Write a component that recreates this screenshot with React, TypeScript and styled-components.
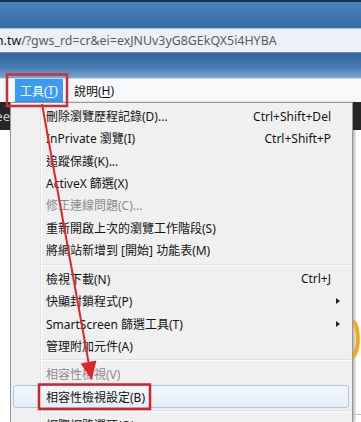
import styled, { createGlobalStyle } from 'styled-components';

const GlobalStyle = createGlobalStyle`
  html, body { margin: 0; padding: 0; background: #fff; }
  body { font-family: "Noto Sans", "Noto Sans CJK TC", sans-serif; }
`;

const Screen = styled.div`
  position: relative;
  width: 361px;
  height: 422px;
  overflow: hidden;
  display: flex;
  flex-direction: column;
  background: #fff;
`;

const TitleBand = styled.div`
  flex: none;
  height: 28px;
  box-sizing: border-box;
  border-top: 2px solid #16304d;
  background: linear-gradient(180deg, #4a82ba 0%, #3c74ad 60%, #386fa8 100%);
`;

const AddressBar = styled.div`
  flex: none;
  height: 25px;
  box-sizing: border-box;
  border-top: 1px solid #a9c0d8;
  border-bottom: 1px solid #6a8fb6;
  background: #ecf1f7;
  display: flex;
  align-items: center;
  white-space: nowrap;
  overflow: hidden;
  font-size: 12.4px;
  color: #5c5c5c;
`;

const Host = styled.span`
  color: #111;
  margin-left: -8px;
`;

const NavBand = styled.div`
  flex: none;
  height: 26px;
  box-sizing: border-box;
  border-bottom: 1px solid #c9d9ea;
  background: linear-gradient(180deg, #3467a0 0%, #4478b0 55%, #7ea7d0 100%);
`;

const MenuBar = styled.div`
  flex: none;
  height: 23px;
  display: flex;
  align-items: stretch;
  padding-left: 15px;
  gap: 6px;
  background: #f7f8f9;
  font-size: 12px;
`;

const MenuTitle = styled.div<{ $active?: boolean }>`
  display: flex;
  align-items: center;
  padding: 0 5px;
  color: ${(p) => (p.$active ? '#fff' : '#111')};
  background: ${(p) => (p.$active ? '#3a9af4' : 'transparent')};
  u { text-underline-offset: 2px; }
`;

const Body = styled.div`
  flex: 1;
  display: flex;
  min-height: 0;
`;

const PageSide = styled.div<{ $w: number }>`
  flex: none;
  width: ${(p) => p.$w}px;
  display: flex;
  flex-direction: column;
  position: relative;
`;

const DarkStrip = styled.div`
  height: 28px;
  background: #262626;
  color: #cfcfcf;
  font-size: 13px;
  display: flex;
  align-items: center;
  justify-content: flex-end;
  overflow: hidden;
  white-space: nowrap;
`;

const Arc = styled.svg`
  margin-top: 189px;
  display: block;
`;

const Rule = styled.div`
  margin-top: 55px;
  margin-left: 2px;
  height: 1px;
  background: #bdbdbd;
`;

const Menu = styled.div`
  flex: none;
  width: 343px;
  box-sizing: border-box;
  border: 1px solid #979797;
  border-bottom: none;
  padding-top: 2px;
  box-shadow: 2px 0 2px rgba(0, 0, 0, 0.28);
  background: linear-gradient(
    to right,
    #f0f0f0 29px,
    #e2e3e3 29px,
    #e2e3e3 30px,
    #ffffff 30px,
    #ffffff 31px,
    #f0f0f0 31px
  );
  font-size: 12px;
  color: #111;
`;

const Row = styled.div<{ $disabled?: boolean; $hot?: boolean }>`
  height: 22.33px;
  box-sizing: border-box;
  margin: 0 3px 0 2px;
  padding-left: 32px;
  display: flex;
  align-items: center;
  justify-content: space-between;
  white-space: nowrap;
  border: 1px solid ${(p) => (p.$hot ? '#a9c6e8' : 'transparent')};
  border-radius: 3px;
  background: ${(p) =>
    p.$hot ? 'linear-gradient(180deg, #f3f7fc 0%, #e6eef8 100%)' : 'transparent'};
  color: ${(p) => (p.$disabled ? '#8c8c8c' : '#141414')};
`;

const Shortcut = styled.span`
  margin-right: 17px;
`;

const SubArrow = styled.span`
  width: 0;
  height: 0;
  margin-right: 8px;
  border-top: 3.5px solid transparent;
  border-bottom: 3.5px solid transparent;
  border-left: 4px solid #222;
`;

const Separator = styled.div<{ $h: number }>`
  height: ${(p) => p.$h}px;
  margin-left: 31px;
  margin-right: 1px;
  display: flex;
  flex-direction: column;
  justify-content: center;
  &::before {
    content: '';
    height: 1px;
    background: #e0e0e0;
  }
  &::after {
    content: '';
    height: 1px;
    background: #fff;
  }
`;

const Marks = styled.svg`
  position: absolute;
  left: 0;
  top: 0;
  pointer-events: none;
`;

type Item = { label: string; key?: string; sub?: boolean; disabled?: boolean; hot?: boolean };

const groups: Item[][] = [
  [
    { label: '刪除瀏覽歷程記錄(D)...', key: 'Ctrl+Shift+Del' },
    { label: 'InPrivate 瀏覽(I)', key: 'Ctrl+Shift+P' },
    { label: '追蹤保護(K)...' },
    { label: 'ActiveX 篩選(X)' },
    { label: '修正連線問題(C)...', disabled: true },
    { label: '重新開啟上次的瀏覽工作階段(S)' },
    { label: '將網站新增到 [開始] 功能表(M)' },
  ],
  [
    { label: '檢視下載(N)', key: 'Ctrl+J' },
    { label: '快顯封鎖程式(P)', sub: true },
    { label: 'SmartScreen 篩選工具(T)', sub: true },
    { label: '管理附加元件(A)' },
  ],
  [
    { label: '相容性檢視(V)', disabled: true },
    { label: '相容性檢視設定(B)', hot: true },
  ],
  [{ label: '網際網路選項(O)' }],
];

const sepHeights = [6.5, 6, 6.5];

const MenuRow = ({ item }: { item: Item }) => (
  <Row $disabled={item.disabled} $hot={item.hot}>
    <span>{item.label}</span>
    {item.key && <Shortcut>{item.key}</Shortcut>}
    {item.sub && <SubArrow />}
  </Row>
);

export default function App() {
  return (
    <Screen>
      <GlobalStyle />
      <TitleBand />
      <AddressBar>
        <Host>m.tw</Host>/?gws_rd=cr&amp;ei=exJNUv3yG8GEkQX5i4HYBA
      </AddressBar>
      <NavBand />
      <MenuBar>
        <MenuTitle $active>
          工具(<u>T</u>)
        </MenuTitle>
        <MenuTitle>
          說明(<u>H</u>)
        </MenuTitle>
      </MenuBar>
      <Body>
        <PageSide $w={10}>
          <DarkStrip>ee</DarkStrip>
        </PageSide>
        <Menu>
          {groups.map((g, gi) => (
            <div key={gi}>
              {g.map((item) => (
                <MenuRow key={item.label} item={item} />
              ))}
              {gi < sepHeights.length && <Separator $h={sepHeights[gi]} />}
            </div>
          ))}
        </Menu>
        <PageSide $w={8}>
          <DarkStrip />
          <Arc width="8" height="40" viewBox="0 0 8 40">
            <path d="M0 2 C 6 8, 7 30, 0 38" fill="none" stroke="#f5a915" strokeWidth="4" />
          </Arc>
          <Rule />
        </PageSide>
      </Body>
      <Marks width="361" height="422" viewBox="0 0 361 422">
        <rect x="7" y="74.5" width="60" height="31.5" fill="none" stroke="#cc2f38" strokeWidth="2.5" />
        <rect x="39" y="384.5" width="111" height="24.5" fill="none" stroke="#d42229" strokeWidth="2.5" />
        <line x1="42" y1="104" x2="88.5" y2="362" stroke="#e0262b" strokeWidth="2" />
        <polygon points="80.6,363.4 96.4,360.6 91.8,380" fill="#e0262b" />
      </Marks>
    </Screen>
  );
}
